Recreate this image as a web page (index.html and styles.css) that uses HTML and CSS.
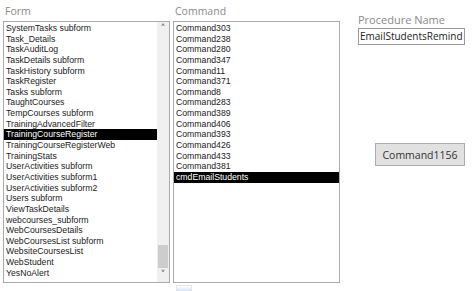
FILE: index.html
```html
<!DOCTYPE html>
<html lang="en">
<head>
    <meta charset="UTF-8">
    <title>Procedure Builder</title>
    <link rel="stylesheet" href="styles.css">
</head>
<body>
    <div class="panel">
        <div class="col">
            <div class="caption">Form</div>
            <div class="listbox">
                <div class="items">
                    <div class="item">SystemTasks subform</div>
                    <div class="item">Task_Details</div>
                    <div class="item">TaskAuditLog</div>
                    <div class="item">TaskDetails subform</div>
                    <div class="item">TaskHistory subform</div>
                    <div class="item">TaskRegister</div>
                    <div class="item">Tasks subform</div>
                    <div class="item">TaughtCourses</div>
                    <div class="item">TempCourses subform</div>
                    <div class="item">TrainingAdvancedFilter</div>
                    <div class="item selected">TrainingCourseRegister</div>
                    <div class="item">TrainingCourseRegisterWeb</div>
                    <div class="item">TrainingStats</div>
                    <div class="item">UserActivities subform</div>
                    <div class="item">UserActivities subform1</div>
                    <div class="item">UserActivities subform2</div>
                    <div class="item">Users subform</div>
                    <div class="item">ViewTaskDetails</div>
                    <div class="item">webcourses_subform</div>
                    <div class="item">WebCoursesDetails</div>
                    <div class="item">WebCoursesList subform</div>
                    <div class="item">WebsiteCoursesList</div>
                    <div class="item">WebStudent</div>
                    <div class="item">YesNoAlert</div>
                </div>
                <div class="scrollbar">
                    <div class="arrow">&#x02C4;</div>
                    <div class="track"><div class="thumb"></div></div>
                    <div class="arrow">&#x02C5;</div>
                </div>
            </div>
        </div>
        <div class="col">
            <div class="caption">Command</div>
            <div class="listbox">
                <div class="items">
                    <div class="item">Command303</div>
                    <div class="item">Command238</div>
                    <div class="item">Command280</div>
                    <div class="item">Command347</div>
                    <div class="item">Command11</div>
                    <div class="item">Command371</div>
                    <div class="item">Command8</div>
                    <div class="item">Command283</div>
                    <div class="item">Command389</div>
                    <div class="item">Command406</div>
                    <div class="item">Command393</div>
                    <div class="item">Command426</div>
                    <div class="item">Command433</div>
                    <div class="item">Command381</div>
                    <div class="item selected">cmdEmailStudents</div>
                </div>
            </div>
            <div class="tab-icon"></div>
        </div>
        <div class="side">
            <div class="caption proc">Procedure Name</div>
            <div class="textbox">EmailStudentsRemind</div>
            <button class="cmd-btn">Command1156</button>
        </div>
    </div>
</body>
</html>
```

FILE: styles.css
```css
body, html {
    margin: 0;
    padding: 0;
    background-color: white;
    height: 291px;
    overflow: hidden;
}
.panel {
    display: flex;
    gap: 3px;
    padding: 5px 0 0 3px;
}
.col {
    display: flex;
    flex-direction: column;
}
.caption {
    height: 16px;
    padding-left: 2px;
    font-family: "Open Sans", sans-serif;
    font-size: 10.5px;
    line-height: 12px;
    color: #8a8a8a;
}
.listbox {
    display: flex;
    width: 165px;
    height: 260px;
    border: 1px solid #ababab;
    background-color: white;
}
.items {
    flex: 1;
    padding-top: 1px;
}
.item {
    height: 10.65px;
    line-height: 10.65px;
    padding-left: 2px;
    font-family: "Liberation Sans", Arial, sans-serif;
    font-size: 8.7px;
    color: #222;
    white-space: nowrap;
    overflow: hidden;
}
.item.selected {
    background-color: black;
    color: white;
}
.scrollbar {
    width: 12px;
    background-color: #f0f0f0;
    display: flex;
    flex-direction: column;
}
.arrow {
    height: 14px;
    font-family: "DejaVu Sans", sans-serif;
    font-size: 10px;
    line-height: 14px;
    text-align: center;
    color: #606060;
}
.track {
    flex: 1;
    display: flex;
    flex-direction: column;
    justify-content: flex-end;
}
.thumb {
    height: 23px;
    background-color: #cdcdcd;
    margin: 0 1px;
}
.tab-icon {
    width: 14px;
    height: 5px;
    margin: 2px 0 0 3px;
    border: 1px solid #e4e4e4;
    border-bottom: none;
    background: linear-gradient(#ffffff, #d6e4f4);
}
.side {
    display: flex;
    flex-direction: column;
    padding: 8px 0 0 15px;
}
.caption.proc {
    height: 14px;
    font-size: 11px;
    line-height: 14px;
    padding-left: 0;
}
.textbox {
    width: 104px;
    height: 15px;
    margin-top: 1px;
    padding-left: 1px;
    border: 1px solid #9a9a9a;
    font-family: "Open Sans", sans-serif;
    font-size: 10px;
    line-height: 15px;
    color: #222;
    white-space: nowrap;
    overflow: hidden;
}
.cmd-btn {
    width: 90px;
    height: 23px;
    margin: 98px 0 0 17px;
    padding: 0;
    background-color: #e1e1e1;
    border: 1px solid #adadad;
    border-radius: 0;
    font-family: "Open Sans", sans-serif;
    font-size: 10.5px;
    color: #333;
}
```
